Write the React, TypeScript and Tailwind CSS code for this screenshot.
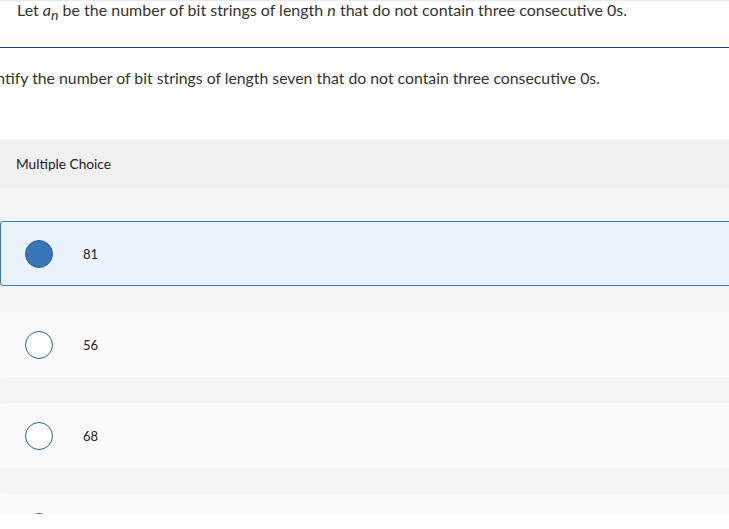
import React from "react";

function Option({ label, selected }: { label: string; selected?: boolean }) {
  return (
    <div
      className={
        selected
          ? "h-[65px] shrink-0 w-[740px] flex items-center rounded-[3px] border border-[#3b79c3] bg-[#eaf2fb]"
          : "h-[65px] shrink-0 w-[740px] flex items-center rounded-[3px] bg-[#fafafa]"
      }
    >
      <div className={selected ? "ml-[24px] w-[28px] h-[28px] rounded-full bg-[#3a74b9] border border-[#2d5f9a]" : "ml-[25px] w-[28px] h-[28px] rounded-full bg-white border-[1.5px] border-[#2f6099]"} />
      <span className="ml-[30px] pt-[3px] text-[13px] text-[#222]">{label}</span>
    </div>
  );
}

export default function App() {
  return (
    <div className="w-[729px] h-[529px] bg-white overflow-hidden font-['Lato',sans-serif] text-[#333]">
      <div className="h-[47px] border-t border-[#e8e8e8] pl-[17px] text-[16px] leading-[18px]">
        Let <i>a<sub className="text-[14px] italic leading-none">n</sub></i> be the number of bit strings of length <i>n</i> that do not contain three consecutive 0s.
      </div>
      <div className="h-px bg-[#22446e]" />
      <div className="h-[91px] pt-[18px] text-[15.8px] whitespace-nowrap -ml-[25px]">
        Identify the number of bit strings of length seven that do not contain three consecutive 0s.
      </div>
      <div className="h-[49px] bg-[#f0f0f0] flex items-center pl-[16px] pt-[2px] text-[13.7px] text-[#222]">
        Multiple Choice
      </div>
      <div className="h-[326px] bg-[#f5f5f5] pt-[33px] flex flex-col gap-[26px] overflow-hidden">
        <Option label="81" selected />
        <Option label="56" />
        <Option label="68" />
        <Option label="" />
      </div>
    </div>
  );
}
